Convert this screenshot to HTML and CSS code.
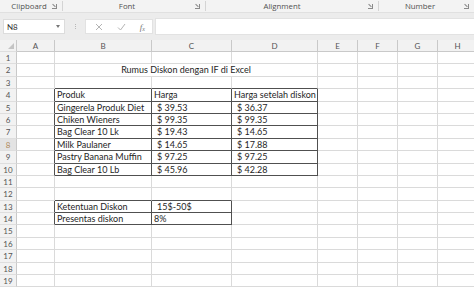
FILE: index.html
```html
<!DOCTYPE html>
<html lang="id">
<head>
    <meta charset="UTF-8">
    <title>Rumus Diskon dengan IF di Excel</title>
    <link rel="stylesheet" href="styles.css">
</head>
<body>
    <div class="ribbon">
        <div class="group g-clip"><span class="label">Clipboard</span><span class="launch"></span></div>
        <div class="group g-font"><span class="label">Font</span><span class="launch"></span></div>
        <div class="group g-align"><span class="label">Alignment</span><span class="launch"></span></div>
        <div class="group g-num"><span class="label">Number</span><span class="launch"></span></div>
    </div>

    <div class="formula-bar">
        <div class="name-box"><span>N8</span><span class="caret"></span></div>
        <div class="grip"><i></i><i></i><i></i></div>
        <div class="fx-buttons">
            <svg width="8" height="8" viewBox="0 0 8 8"><path d="M1 1L7 7M7 1L1 7" stroke="#b4b4b4" stroke-width="1" fill="none"/></svg>
            <svg width="9" height="8" viewBox="0 0 9 8"><path d="M1 4.5L3.5 7L8 1" stroke="#b4b4b4" stroke-width="1" fill="none"/></svg>
            <span class="fx"><i>f</i><sub>x</sub></span>
        </div>
        <div class="formula-input"></div>
    </div>

    <div class="sheet">
        <div class="row head">
            <div class="rh corner"><span class="tri"></span></div>
            <div class="c ca">A</div><div class="c cb">B</div><div class="c cc">C</div><div class="c cd">D</div>
            <div class="c ce">E</div><div class="c cf">F</div><div class="c cg">G</div><div class="c ch">H</div>
        </div>
        <div class="row">
            <div class="rh">1</div>
            <div class="c ca"></div><div class="c cb"></div><div class="c cc"></div><div class="c cd"></div>
            <div class="c ce"></div><div class="c cf"></div><div class="c cg"></div><div class="c ch"></div>
        </div>
        <div class="row">
            <div class="rh">2</div>
            <div class="c ca"></div><div class="c cbd title">Rumus Diskon dengan IF di Excel</div>
            <div class="c ce"></div><div class="c cf"></div><div class="c cg"></div><div class="c ch"></div>
        </div>
        <div class="row">
            <div class="rh">3</div>
            <div class="c ca"></div><div class="c cb bb"></div><div class="c cc bb"></div><div class="c cd bb"></div>
            <div class="c ce"></div><div class="c cf"></div><div class="c cg"></div><div class="c ch"></div>
        </div>
        <div class="row">
            <div class="rh">4</div>
            <div class="c ca br"></div><div class="c cb t">Produk</div><div class="c cc t">Harga</div><div class="c cd t">Harga setelah diskon</div>
            <div class="c ce"></div><div class="c cf"></div><div class="c cg"></div><div class="c ch"></div>
        </div>
        <div class="row">
            <div class="rh">5</div>
            <div class="c ca br"></div><div class="c cb t">Gingerela Produk Diet</div><div class="c cc t money">$ 39.53</div><div class="c cd t money">$ 36.37</div>
            <div class="c ce"></div><div class="c cf"></div><div class="c cg"></div><div class="c ch"></div>
        </div>
        <div class="row">
            <div class="rh">6</div>
            <div class="c ca br"></div><div class="c cb t">Chiken Wieners</div><div class="c cc t money">$ 99.35</div><div class="c cd t money">$ 99.35</div>
            <div class="c ce"></div><div class="c cf"></div><div class="c cg"></div><div class="c ch"></div>
        </div>
        <div class="row">
            <div class="rh">7</div>
            <div class="c ca br"></div><div class="c cb t">Bag Clear 10 Lk</div><div class="c cc t money">$ 19.43</div><div class="c cd t money">$ 14.65</div>
            <div class="c ce"></div><div class="c cf"></div><div class="c cg"></div><div class="c ch"></div>
        </div>
        <div class="row">
            <div class="rh active">8</div>
            <div class="c ca br"></div><div class="c cb t">Milk Paulaner</div><div class="c cc t money">$ 14.65</div><div class="c cd t money">$ 17.88</div>
            <div class="c ce"></div><div class="c cf"></div><div class="c cg"></div><div class="c ch"></div>
        </div>
        <div class="row">
            <div class="rh">9</div>
            <div class="c ca br"></div><div class="c cb t">Pastry Banana Muffin</div><div class="c cc t money">$ 97.25</div><div class="c cd t money">$ 97.25</div>
            <div class="c ce"></div><div class="c cf"></div><div class="c cg"></div><div class="c ch"></div>
        </div>
        <div class="row">
            <div class="rh">10</div>
            <div class="c ca br"></div><div class="c cb t">Bag Clear 10 Lb</div><div class="c cc t money">$ 45.96</div><div class="c cd t money">$ 42.28</div>
            <div class="c ce"></div><div class="c cf"></div><div class="c cg"></div><div class="c ch"></div>
        </div>
        <div class="row">
            <div class="rh">11</div>
            <div class="c ca"></div><div class="c cb"></div><div class="c cc"></div><div class="c cd"></div>
            <div class="c ce"></div><div class="c cf"></div><div class="c cg"></div><div class="c ch"></div>
        </div>
        <div class="row">
            <div class="rh">12</div>
            <div class="c ca"></div><div class="c cb bb"></div><div class="c cc bb"></div><div class="c cd"></div>
            <div class="c ce"></div><div class="c cf"></div><div class="c cg"></div><div class="c ch"></div>
        </div>
        <div class="row">
            <div class="rh">13</div>
            <div class="c ca br"></div><div class="c cb t">Ketentuan Diskon</div><div class="c cc t money">15$-50$</div><div class="c cd"></div>
            <div class="c ce"></div><div class="c cf"></div><div class="c cg"></div><div class="c ch"></div>
        </div>
        <div class="row">
            <div class="rh">14</div>
            <div class="c ca br"></div><div class="c cb t">Presentas diskon</div><div class="c cc t">8%</div><div class="c cd"></div>
            <div class="c ce"></div><div class="c cf"></div><div class="c cg"></div><div class="c ch"></div>
        </div>
        <div class="row">
            <div class="rh">15</div>
            <div class="c ca"></div><div class="c cb"></div><div class="c cc"></div><div class="c cd"></div>
            <div class="c ce"></div><div class="c cf"></div><div class="c cg"></div><div class="c ch"></div>
        </div>
        <div class="row">
            <div class="rh">16</div>
            <div class="c ca"></div><div class="c cb"></div><div class="c cc"></div><div class="c cd"></div>
            <div class="c ce"></div><div class="c cf"></div><div class="c cg"></div><div class="c ch"></div>
        </div>
        <div class="row">
            <div class="rh">17</div>
            <div class="c ca"></div><div class="c cb"></div><div class="c cc"></div><div class="c cd"></div>
            <div class="c ce"></div><div class="c cf"></div><div class="c cg"></div><div class="c ch"></div>
        </div>
        <div class="row">
            <div class="rh">18</div>
            <div class="c ca"></div><div class="c cb"></div><div class="c cc"></div><div class="c cd"></div>
            <div class="c ce"></div><div class="c cf"></div><div class="c cg"></div><div class="c ch"></div>
        </div>
        <div class="row">
            <div class="rh">19</div>
            <div class="c ca"></div><div class="c cb"></div><div class="c cc"></div><div class="c cd"></div>
            <div class="c ce"></div><div class="c cf"></div><div class="c cg"></div><div class="c ch"></div>
        </div>
    </div>
</body>
</html>
```

FILE: styles.css
```css
:root {
    --grid: #dadada;
    --head-bg: #f2f2f2;
    --head-line: #c9c9c9;
    --head-text: #555;
    --cell-text: #1e1e1e;
    --table-line: #505050;
}

html, body { margin: 0; padding: 0; }
body {
    width: 474px;
    height: 288px;
    overflow: hidden;
    background: #fff;
    font-family: 'Lato', 'Liberation Sans', Arial, sans-serif;
}

/* ribbon group labels */
.ribbon {
    display: flex;
    height: 12px;
    background: #f3f3f3;
    border-bottom: 1px solid #e0e0e0;
    font-family: 'Open Sans', 'Liberation Sans', sans-serif;
    font-size: 7.8px;
    color: #505050;
    white-space: nowrap;
}
.group {
    display: flex;
    align-items: center;
    border-right: 1px solid #d4d4d4;
    box-sizing: border-box;
    height: 10px;
    margin-top: 1px;
}
.group .label { flex: 1; text-align: center; line-height: 10px; }
.g-clip { width: 63px; padding-left: 10px; }
.g-font { width: 143px; }
.g-align { width: 173px; }
.g-align .label { padding-right: 6px; }
.g-num { flex: 1; border-right: none; padding-left: 1px; }
.launch {
    width: 4px;
    height: 4px;
    border-right: 1px solid #8a8a8a;
    border-bottom: 1px solid #8a8a8a;
    margin: 0 5px 0 4px;
    position: relative;
}
.launch::after {
    content: '';
    position: absolute;
    left: 0;
    top: 1px;
    width: 4px;
    height: 1px;
    background: #8a8a8a;
    transform: rotate(45deg);
}

/* formula bar */
.formula-bar {
    display: flex;
    align-items: center;
    height: 27px;
    background: #ececec;
    padding: 0 0 0 3px;
}
.name-box {
    width: 62px;
    height: 15px;
    box-sizing: border-box;
    background: #fff;
    border: 1px solid #dcdcdc;
    display: flex;
    align-items: center;
    justify-content: space-between;
    padding: 0 4px 0 3px;
    font-size: 8px;
    color: #333;
}
.caret {
    width: 0;
    height: 0;
    border-left: 2.5px solid transparent;
    border-right: 2.5px solid transparent;
    border-top: 3px solid #777;
}
.grip {
    width: 20px;
    display: flex;
    flex-direction: column;
    align-items: center;
    gap: 1px;
}
.grip i { width: 1px; height: 1px; background: #b8b8b8; }
.fx-buttons {
    width: 68px;
    height: 15px;
    box-sizing: border-box;
    background: #fff;
    border: 1px solid #e2e2e2;
    display: flex;
    align-items: center;
    justify-content: space-between;
    padding: 0 7px 0 9px;
}
.fx {
    font-family: 'Liberation Serif', serif;
    font-size: 9px;
    color: #777;
}
.fx sub { font-size: 6px; font-style: italic; vertical-align: -1px; }
.formula-input {
    flex: 1;
    height: 15px;
    margin-left: 2px;
    background: #fff;
    border: 1px solid #e2e2e2;
    border-right: none;
}

/* sheet */
.sheet { display: flex; flex-direction: column; }
.row {
    display: flex;
    height: 12.4px;
    flex-shrink: 0;
}
.row.head { height: 12px; }
.rh, .c { box-sizing: border-box; flex-shrink: 0; }
.rh {
    width: 17px;
    background: var(--head-bg);
    border-right: 1px solid var(--head-line);
    border-bottom: 1px solid #dedede;
    font-size: 8px;
    color: var(--head-text);
    text-align: center;
    line-height: 12px;
}
.rh.active { background: #e3e3e3; color: #b08a5a; }
.corner { position: relative; }
.tri {
    position: absolute;
    right: 2px;
    bottom: 2px;
    width: 0;
    height: 0;
    border-left: 6px solid transparent;
    border-bottom: 6px solid #c4c4c4;
}
.c {
    border-right: 1px solid var(--grid);
    border-bottom: 1px solid var(--grid);
    font-size: 9px;
    color: var(--cell-text);
    padding-left: 2px;
    line-height: 12px;
    white-space: nowrap;
    overflow: hidden;
}
.head .c {
    background: var(--head-bg);
    border-right: 1px solid var(--head-line);
    border-bottom: 1px solid var(--head-line);
    text-align: center;
    font-size: 8px;
    color: var(--head-text);
    padding-left: 0;
}
.ca { width: 38px; }
.cb { width: 97px; }
.cc { width: 80px; }
.cd { width: 86px; }
.cbd { width: 263px; }
.ce, .cf, .cg, .ch { width: 40px; }

.title { text-align: center; padding-left: 0; }
.money { padding-left: 5px; }

.bb { border-bottom-color: var(--table-line); }
.br { border-right-color: var(--table-line); }
.t { border-right-color: var(--table-line); border-bottom-color: var(--table-line); }
```
